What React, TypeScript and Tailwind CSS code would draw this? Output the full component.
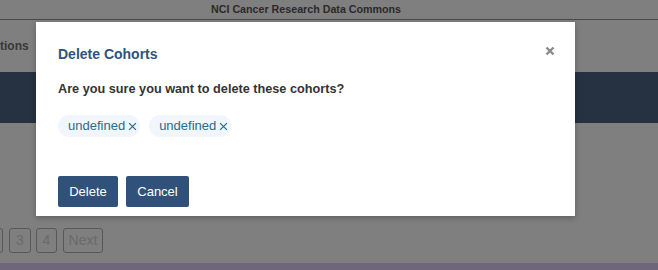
import React from "react";

function CloseIcon({ className }: { className?: string }) {
  return (
    <svg viewBox="0 0 10 10" className={className} fill="none">
      <path d="M1.5 1.5 L8.5 8.5 M8.5 1.5 L1.5 8.5" stroke="currentColor" strokeWidth="2.4" />
    </svg>
  );
}

function Tag({ label }: { label: string }) {
  return (
    <span className="flex h-[22px] items-center rounded-full bg-[#f0f6fc] pl-[10px] pr-[3px] text-[13px] text-[#2b6b8c]">
      {label}
      <svg viewBox="0 0 10 10" className="ml-[3px] h-[9px] w-[9px]" fill="none">
        <path d="M1.2 1.2 L8.8 8.8 M8.8 1.2 L1.2 8.8" stroke="currentColor" strokeWidth="1.4" />
      </svg>
    </span>
  );
}

export default function App() {
  const pageBtn =
    "flex h-[25px] items-center justify-center rounded-[3px] border border-[#585858] text-[14px] text-[#6a6a6a]";

  return (
    <div className="relative h-[270px] w-[658px] overflow-hidden bg-[#7f7f7f] font-['Liberation_Sans',Arial,sans-serif]">
      {/* page behind the overlay */}
      <div className="flex h-[20px] items-center border-b border-[#4a4a4a] pl-[211px] text-[10.7px] font-bold text-[#2a2a2a]">
        NCI Cancer Research Data Commons
      </div>
      <div className="flex h-[52px] items-center text-[12px] font-bold text-[#383838]">tions</div>
      <div className="h-[51px] bg-[#263241]" />
      <div className="h-[140px] pt-[105px]">
        <div className="flex">
          <span className={`${pageBtn} ml-[-19px] w-[22px]`} />
          <span className={`${pageBtn} ml-[6px] w-[22px]`}>3</span>
          <span className={`${pageBtn} ml-[5px] w-[21px]`}>4</span>
          <span className={`${pageBtn} ml-[6px] w-[40px]`}>Next</span>
        </div>
      </div>
      <div className="h-[7px] bg-[#6f6679]" />

      {/* modal */}
      <div className="absolute left-[36px] top-[22px] flex h-[194px] w-[539px] flex-col bg-white px-[22px] pt-[22px] shadow-[0_2px_6px_rgba(0,0,0,0.25)]">
        <button className="absolute right-[20px] top-[24px] text-[#8a8a8a]">
          <CloseIcon className="h-[10px] w-[10px]" />
        </button>
        <h2 className="text-[14px] font-bold leading-[20px] text-[#2f5280]">Delete Cohorts</h2>
        <p className="mt-[15px] text-[12.7px] font-bold leading-[20px] text-[#333333]">
          Are you sure you want to delete these cohorts?
        </p>
        <div className="mt-[16px] flex gap-[9px]">
          <Tag label="undefined" />
          <Tag label="undefined" />
        </div>
        <div className="mt-[39px] flex gap-[8px]">
          <button className="h-[31px] w-[60px] rounded-[2px] bg-[#30527a] text-[13px] text-white">Delete</button>
          <button className="h-[31px] w-[63px] rounded-[2px] bg-[#30527a] text-[13px] text-white">Cancel</button>
        </div>
      </div>
    </div>
  );
}
